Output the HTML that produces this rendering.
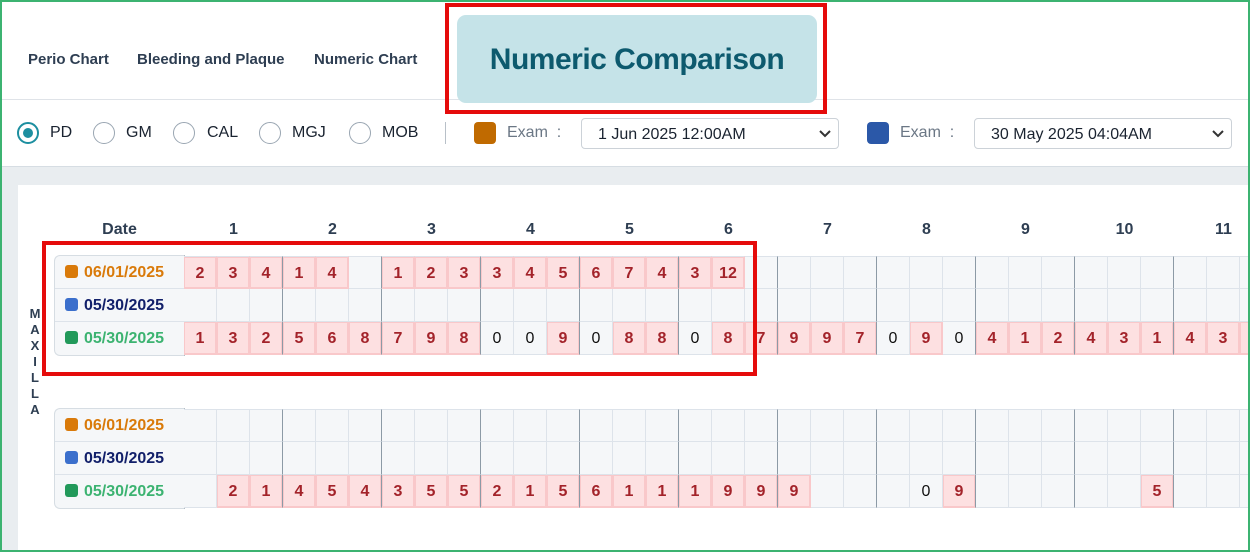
<!DOCTYPE html>
<html><head><meta charset="utf-8"><style>
*{box-sizing:border-box;margin:0;padding:0}
body{width:1250px;height:552px;overflow:hidden;font-family:"Liberation Sans",Arial,sans-serif;background:#fff;position:relative}
.frame{position:absolute;inset:0;border:2px solid #3cb371;z-index:50;pointer-events:none}
.tab{position:absolute;top:51px;font-size:15px;font-weight:bold;color:#2e3e52}
.hline{position:absolute;left:2px;right:2px;top:99px;height:1px;background:#dfe3e8}
.btn{position:absolute;left:457px;top:15px;width:360px;height:88px;background:#c5e3e8;border-radius:9px;color:#0d5a6e;font-weight:bold;font-size:30px;text-align:center;line-height:90px;letter-spacing:-0.5px}
.red{position:absolute;border:4px solid #e50b0b;z-index:40}
.radio{position:absolute;top:122px;width:22px;height:22px;border-radius:50%;border:1.5px solid #9aa6b2;background:#fff}
.radio.on{border:2px solid #1d8fa0}
.radio.on:after{content:"";position:absolute;left:4px;top:4px;width:10px;height:10px;border-radius:50%;background:#1d8fa0}
.rl{position:absolute;top:124px;font-size:16px;color:#1a2330}
.sw{position:absolute;top:122px;width:22px;height:22px;border-radius:4px}
.ex{position:absolute;top:124px;font-size:16px;color:#6b7785}
.sel{position:absolute;top:118px;height:31px;border:1px solid #ccd2d8;border-radius:4px;font-size:16px;color:#1a2330;padding:7px 0 0 16px}
.sel svg{position:absolute;right:6px;top:10px}
.gray{position:absolute;left:2px;right:2px;top:166px;bottom:2px;background:#e9edf0;border-top:1px solid #d6dde3}
.card{position:absolute;left:18px;top:185px;right:2px;bottom:2px;background:#fff}
.hd{position:absolute;top:221px;font-size:16px;font-weight:bold;color:#2e3e52;width:99px;text-align:center}
.lab{position:absolute;left:54px;width:131px;border:1px solid #d6dde3;border-right:1px solid #8c9aa6;border-radius:6px 0 0 6px;background:#f5f7f9}
.lab div{height:33px;border-bottom:1px solid #dde3ea;font-size:16px;font-weight:bold;padding:8px 0 0 10px;white-space:nowrap}
.lab div:last-child{border-bottom:none}
.lab b{display:inline-block;width:13px;height:13px;border-radius:3px;margin-right:6px;vertical-align:-1px}
.row{position:absolute;left:184px;display:flex;height:33px}
.row i{display:block;flex:0 0 33px;height:33px;font-style:normal;background:#f5f7f9;border-right:1px solid #dde3ea;border-bottom:1px solid #dde3ea;text-align:center;font-size:16px;line-height:33px;color:#111}
.row i.p{background:#fde0e1;color:#a3232a;font-weight:bold;box-shadow:inset 0 0 0 1px #f9c8ca;border-right-color:#f9c8ca;border-bottom-color:#f9c8ca}
.row i:nth-child(3n),.row i.p:nth-child(3n){border-right:1px solid #8c9aa6}
.top i{border-top:1px solid #dde3ea}
.mx{position:absolute;left:29px;top:306px;width:12px;font-size:13px;font-weight:bold;color:#2e3e52;text-align:center;line-height:16px}
</style></head><body>
<div class="frame"></div>
<div class="tab" style="left:28px">Perio Chart</div>
<div class="tab" style="left:137px">Bleeding and Plaque</div>
<div class="tab" style="left:314px">Numeric Chart</div>
<div class="hline"></div>
<div class="btn">Numeric Comparison</div>
<div class="red" style="left:445px;top:3px;width:382px;height:111px"></div>

<div class="radio on" style="left:17px"></div><div class="rl" style="left:50px">PD</div>
<div class="radio" style="left:93px"></div><div class="rl" style="left:126px">GM</div>
<div class="radio" style="left:173px"></div><div class="rl" style="left:207px">CAL</div>
<div class="radio" style="left:259px"></div><div class="rl" style="left:292px">MGJ</div>
<div class="radio" style="left:349px"></div><div class="rl" style="left:382px">MOB</div>
<div style="position:absolute;left:445px;top:122px;width:1px;height:22px;background:#b8c0c8"></div>
<div class="sw" style="left:474px;background:#c06a00"></div><div class="ex" style="left:507px">Exam &nbsp;:</div>
<div class="sel" style="left:581px;width:258px">1 Jun 2025 12:00AM<svg width="14" height="10" viewBox="0 0 14 10"><path d="M2 2l5 5 5-5" stroke="#333" stroke-width="2" fill="none"/></svg></div>
<div class="sw" style="left:867px;background:#2b58a8"></div><div class="ex" style="left:900px">Exam &nbsp;:</div>
<div class="sel" style="left:974px;width:258px">30 May 2025 04:04AM<svg width="14" height="10" viewBox="0 0 14 10"><path d="M2 2l5 5 5-5" stroke="#333" stroke-width="2" fill="none"/></svg></div>

<div class="gray"></div>
<div class="card"></div>

<div class="hd" style="left:70px;width:99px">Date</div>
<div class="hd" style="left:184px">1</div><div class="hd" style="left:283px">2</div><div class="hd" style="left:382px">3</div><div class="hd" style="left:481px">4</div><div class="hd" style="left:580px">5</div><div class="hd" style="left:679px">6</div><div class="hd" style="left:778px">7</div><div class="hd" style="left:877px">8</div><div class="hd" style="left:976px">9</div><div class="hd" style="left:1075px">10</div><div class="hd" style="left:1174px">11</div>

<div class="mx">M<br>A<br>X<br>I<br>L<br>L<br>A</div>

<div class="lab" style="top:255px;height:101px">
<div style="color:#d97a0a"><b style="background:#d97a0a"></b>06/01/2025</div>
<div style="color:#12206a"><b style="background:#3b6fcc"></b>05/30/2025</div>
<div style="color:#3cb371"><b style="background:#22995a"></b>05/30/2025</div>
</div>
<div class="row top" style="top:256px"><i class="p">2</i><i class="p">3</i><i class="p">4</i><i class="p">1</i><i class="p">4</i><i></i><i class="p">1</i><i class="p">2</i><i class="p">3</i><i class="p">3</i><i class="p">4</i><i class="p">5</i><i class="p">6</i><i class="p">7</i><i class="p">4</i><i class="p">3</i><i class="p">12</i><i></i><i></i><i></i><i></i><i></i><i></i><i></i><i></i><i></i><i></i><i></i><i></i><i></i><i></i><i></i><i></i></div>
<div class="row" style="top:289px"><i></i><i></i><i></i><i></i><i></i><i></i><i></i><i></i><i></i><i></i><i></i><i></i><i></i><i></i><i></i><i></i><i></i><i></i><i></i><i></i><i></i><i></i><i></i><i></i><i></i><i></i><i></i><i></i><i></i><i></i><i></i><i></i><i></i></div>
<div class="row" style="top:322px"><i class="p">1</i><i class="p">3</i><i class="p">2</i><i class="p">5</i><i class="p">6</i><i class="p">8</i><i class="p">7</i><i class="p">9</i><i class="p">8</i><i>0</i><i>0</i><i class="p">9</i><i>0</i><i class="p">8</i><i class="p">8</i><i>0</i><i class="p">8</i><i class="p">7</i><i class="p">9</i><i class="p">9</i><i class="p">7</i><i>0</i><i class="p">9</i><i>0</i><i class="p">4</i><i class="p">1</i><i class="p">2</i><i class="p">4</i><i class="p">3</i><i class="p">1</i><i class="p">4</i><i class="p">3</i><i class="p"></i></div>
<div class="red" style="left:42px;top:241px;width:715px;height:135px"></div>

<div class="lab" style="top:408px;height:101px">
<div style="color:#d97a0a"><b style="background:#d97a0a"></b>06/01/2025</div>
<div style="color:#12206a"><b style="background:#3b6fcc"></b>05/30/2025</div>
<div style="color:#3cb371"><b style="background:#22995a"></b>05/30/2025</div>
</div>
<div class="row top" style="top:409px"><i></i><i></i><i></i><i></i><i></i><i></i><i></i><i></i><i></i><i></i><i></i><i></i><i></i><i></i><i></i><i></i><i></i><i></i><i></i><i></i><i></i><i></i><i></i><i></i><i></i><i></i><i></i><i></i><i></i><i></i><i></i><i></i><i></i></div>
<div class="row" style="top:442px"><i></i><i></i><i></i><i></i><i></i><i></i><i></i><i></i><i></i><i></i><i></i><i></i><i></i><i></i><i></i><i></i><i></i><i></i><i></i><i></i><i></i><i></i><i></i><i></i><i></i><i></i><i></i><i></i><i></i><i></i><i></i><i></i><i></i></div>
<div class="row" style="top:475px"><i></i><i class="p">2</i><i class="p">1</i><i class="p">4</i><i class="p">5</i><i class="p">4</i><i class="p">3</i><i class="p">5</i><i class="p">5</i><i class="p">2</i><i class="p">1</i><i class="p">5</i><i class="p">6</i><i class="p">1</i><i class="p">1</i><i class="p">1</i><i class="p">9</i><i class="p">9</i><i class="p">9</i><i></i><i></i><i></i><i>0</i><i class="p">9</i><i></i><i></i><i></i><i></i><i></i><i class="p">5</i><i></i><i></i><i></i></div>
</body></html>
